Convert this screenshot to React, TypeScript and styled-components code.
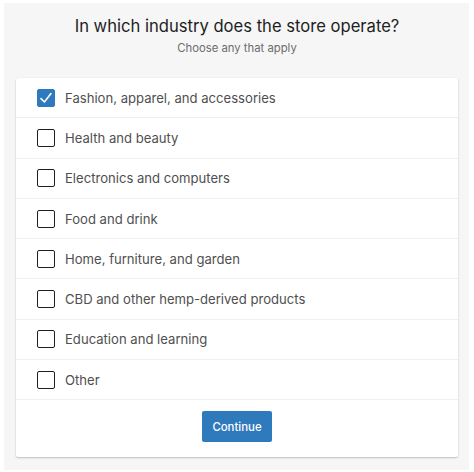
import styled, { createGlobalStyle } from 'styled-components';

const GlobalStyle = createGlobalStyle`
  html, body {
    margin: 0;
    padding: 0;
    background: #ffffff;
  }
  body {
    font-family: Inter, "Liberation Sans", sans-serif;
    -webkit-font-smoothing: antialiased;
  }
`;

const Page = styled.div`
  margin: 3px 5px 2px 4px;
  height: 467px;
  background: #f6f6f6;
  box-sizing: border-box;
  padding: 12px 11px 0 12px;
  display: flex;
  flex-direction: column;
  align-items: center;
`;

const Title = styled.h1`
  margin: 0;
  font-size: 16.6px;
  font-weight: 400;
  line-height: 22px;
  color: #1e1e1e;
`;

const Subtitle = styled.p`
  margin: 3px 0 0;
  font-size: 11.3px;
  line-height: 16px;
  color: #6c6c6c;
`;

const Card = styled.div`
  margin-top: 22px;
  width: 100%;
  background: #ffffff;
  border-radius: 2px;
  box-shadow: 0 1px 2px rgba(0, 0, 0, 0.22), 0 0 1px rgba(0, 0, 0, 0.08);
  display: flex;
  flex-direction: column;
`;

const Row = styled.label`
  display: flex;
  align-items: center;
  gap: 10px;
  height: 40.3px;
  padding-left: 21px;
  border-bottom: 1px solid #efefef;
  box-sizing: border-box;
  cursor: pointer;
`;

const Box = styled.span<{ $checked?: boolean }>`
  width: 18px;
  height: 18px;
  box-sizing: border-box;
  border-radius: 2px;
  border: 1.5px solid ${(p) => (p.$checked ? '#2f79bd' : '#1e1e1e')};
  background: ${(p) => (p.$checked ? '#2f79bd' : '#ffffff')};
  display: flex;
  align-items: center;
  justify-content: center;
  flex-shrink: 0;
`;

const Label = styled.span`
  font-size: 13.1px;
  color: #4f4f4f;
`;

const Footer = styled.div`
  display: flex;
  justify-content: center;
  padding: 11px 0 15px;
`;

const Button = styled.button`
  height: 31px;
  padding: 0 10px;
  border: none;
  border-radius: 2px;
  background: #2f79bd;
  color: #ffffff;
  font-family: inherit;
  font-size: 11.4px;
  font-weight: 500;
  cursor: pointer;
`;

const options = [
  'Fashion, apparel, and accessories',
  'Health and beauty',
  'Electronics and computers',
  'Food and drink',
  'Home, furniture, and garden',
  'CBD and other hemp-derived products',
  'Education and learning',
  'Other',
];

function Check() {
  return (
    <svg width="14" height="14" viewBox="0 0 14 14" fill="none">
      <path d="M2 7.6 L5.4 11 L12 2.6" stroke="#fff" strokeWidth="1.6" strokeLinecap="round" strokeLinejoin="round" />
    </svg>
  );
}

export default function App() {
  return (
    <>
      <GlobalStyle />
      <Page>
        <Title>In which industry does the store operate?</Title>
        <Subtitle>Choose any that apply</Subtitle>
        <Card>
          {options.map((o, i) => (
            <Row key={o}>
              <Box $checked={i === 0}>{i === 0 && <Check />}</Box>
              <Label>{o}</Label>
            </Row>
          ))}
          <Footer>
            <Button>Continue</Button>
          </Footer>
        </Card>
      </Page>
    </>
  );
}
